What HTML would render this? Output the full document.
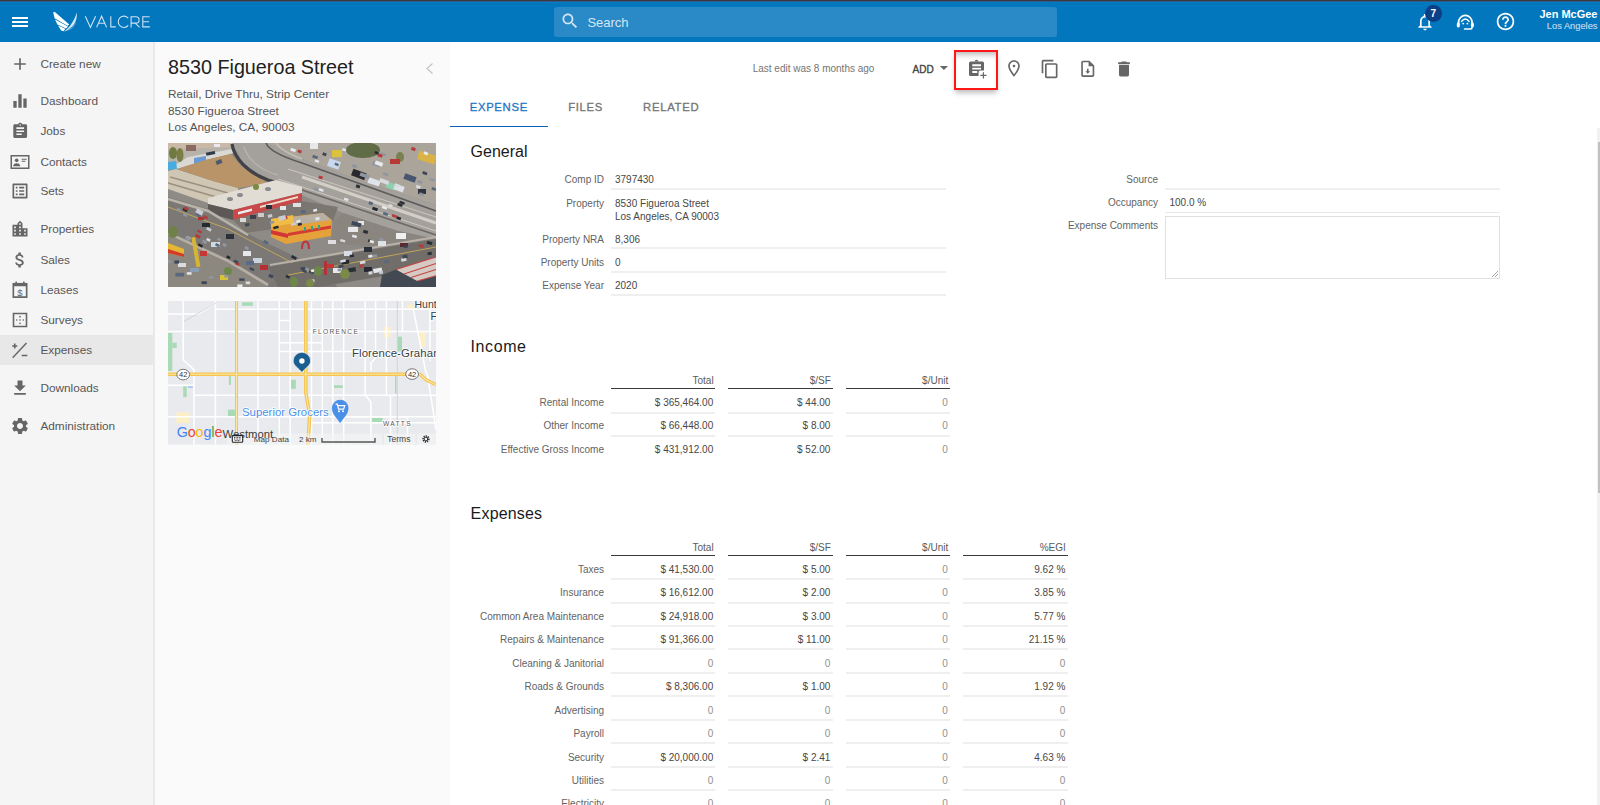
<!DOCTYPE html>
<html><head><meta charset="utf-8"><title>Valcre</title>
<style>
html,body{margin:0;padding:0;width:1600px;height:805px;overflow:hidden;background:#fff;}
body{position:relative;font-family:"Liberation Sans",sans-serif;}
.t{position:absolute;white-space:nowrap;}
.r{position:absolute;display:block;}
</style></head><body>

<div class="r" style="left:0px;top:42px;width:153px;height:763px;background:#f5f5f5;"></div>
<div class="r" style="left:153px;top:42px;width:1.5px;height:763px;background:#e9e9e9;"></div>
<div class="r" style="left:154.5px;top:42px;width:295.5px;height:763px;background:#fafafa;"></div>
<div class="r" style="left:0px;top:0px;width:1600px;height:42px;background:#0277bd;"></div>
<div class="r" style="left:0px;top:0px;width:1600px;height:1px;background:#373945;"></div>
<div class="r" style="left:0px;top:1px;width:1600px;height:1px;background:#35597f;"></div>
<div class="r" style="left:0px;top:2px;width:1600px;height:1px;background:#027bc6;"></div>
<div class="r" style="left:12px;top:16.7px;width:16px;height:2px;background:#ffffff;"></div>
<div class="r" style="left:12px;top:20.9px;width:16px;height:2px;background:#ffffff;"></div>
<div class="r" style="left:12px;top:25.1px;width:16px;height:2px;background:#ffffff;"></div>
<svg class="r" style="left:50px;top:8px;" width="32" height="28" viewBox="0 0 32 28">
<path d="M3.2,4.4 L4.6,3.8 L19.2,16.4 L17.6,17.8 L4.6,10.2 Z" fill="#fff"/>
<path d="M5.0,11.6 L18.0,18.6 L16.0,20.4 L7.4,16.6 Z" fill="#fff"/>
<path d="M8.0,17.6 L15.4,20.8 L13.6,23.2 L11.2,22.4 Z" fill="#fff"/>
<path d="M26.8,4.4 C27.4,12 24.5,19.5 14,23.8 C20.5,18.5 24.5,12 26.8,4.4 Z" fill="#d6e7f4"/>
<path d="M26.3,12 C25,18 21,21.5 15,23.6 C21.5,21.8 25.5,18.5 26.3,12 Z" fill="#a9cce8"/>
</svg>
<svg class="r" style="left:84px;top:14px;" width="68" height="16" viewBox="0 0 68 16">
<g fill="none" stroke="#cfe2f2" stroke-width="1.1" stroke-linejoin="miter">
<path d="M1.3 2.2 L6.45 13.4 L11.6 2.2"/>
<path d="M12.6 13.4 L17.6 2.2 L22.6 13.4 M14.6 9.2 H20.6"/>
<path d="M26.8 2.2 V12.9 H31.8"/>
<path d="M44.2 4.2 A5.6 5.7 0 1 0 44.2 11.4"/>
<path d="M47.1 13.4 V2.7 H51.8 A3.3 3.2 0 0 1 51.8 9.1 H47.1 M51.2 9.1 L55.6 13.4"/>
<path d="M65.6 2.7 H58.8 V12.9 H65.8 M58.8 7.8 H65"/>
</g></svg>
<div class="r" style="left:554px;top:6.7px;width:503px;height:30px;background:#2a8ac8;border-radius:3px;"></div>
<svg class="r" style="left:559.5px;top:11px;" width="20" height="20" viewBox="0 0 24 24"><path fill="#d5e6f3" d="M15.5 14h-.79l-.28-.27C15.41 12.59 16 11.11 16 9.5 16 5.91 13.09 3 9.5 3S3 5.91 3 9.5 5.91 16 9.5 16c1.61 0 3.09-.59 4.23-1.57l.27.28v.79l5 4.99L20.49 19l-4.99-5zm-6 0C7.01 14 5 11.99 5 9.5S7.01 5 9.5 5 14 7.01 14 9.5 11.99 14 9.5 14z"/></svg>
<div class="t" style="left:587.40px;top:16.45px;font-size:13px;line-height:13px;color:#d5e6f3;font-weight:400;">Search</div>
<svg class="r" style="left:1414.5px;top:11.5px;" width="20" height="20" viewBox="0 0 24 24"><path fill="#fff" d="M12 22c1.1 0 2-.9 2-2h-4c0 1.1.89 2 2 2zm6-6v-5c0-3.07-1.64-5.64-4.5-6.32V4c0-.83-.67-1.5-1.5-1.5s-1.5.67-1.5 1.5v.68C7.63 5.36 6 7.92 6 11v5l-2 2v1h16v-1l-2-2zm-2 1H8v-6c0-2.48 1.51-4.5 4-4.5s4 2.02 4 4.5v6z"/></svg>
<div class="r" style="left:1425px;top:5px;width:16.5px;height:16.5px;border-radius:50%;background:#0d3f86;"></div>
<div class="t" style="left:1433.20px;transform:translateX(-50%);top:9.30px;font-size:10px;line-height:10px;color:#ffffff;font-weight:700;">7</div>
<svg class="r" style="left:1455.6px;top:13.6px;" width="18.6" height="16.4" viewBox="0 0 18.6 16.4">
<g fill="none" stroke="#fff" stroke-linecap="round">
<path d="M2.5 10.2 V8.6 A6.8 7.2 0 0 1 16.1 8.6 V10.2" stroke-width="1.7"/>
<path d="M5.6 7.4 Q9.3 2.6 13 7.4" stroke-width="1.5"/>
<path d="M16 12.5 V13.6 Q16 15 14.6 15 H8.6" stroke-width="1.6"/>
</g>
<rect x="0.8" y="8.6" width="3" height="4.8" rx="1.3" fill="#fff"/>
<rect x="14.9" y="8.6" width="3" height="4.8" rx="1.3" fill="#fff"/>
<circle cx="7.2" cy="9.6" r="0.95" fill="#fff"/><circle cx="11.4" cy="9.6" r="0.95" fill="#fff"/>
</svg>
<svg class="r" style="left:1494.8px;top:11.3px;" width="21" height="21" viewBox="0 0 24 24"><path fill="#fff" d="M11 18h2v-2h-2v2zm1-16C6.48 2 2 6.48 2 12s4.48 10 10 10 10-4.48 10-10S17.52 2 12 2zm0 18c-4.41 0-8-3.59-8-8s3.59-8 8-8 8 3.59 8 8-3.59 8-8 8zm0-14c-2.21 0-4 1.79-4 4h2c0-1.1.9-2 2-2s2 .9 2 2c0 2-3 1.75-3 5h2c0-2.25 3-2.5 3-5 0-2.21-1.79-4-4-4z"/></svg>
<div class="t" style="right:2.50px;top:9.15px;font-size:11px;line-height:11px;color:#ffffff;font-weight:700;">Jen McGee</div>
<div class="t" style="right:2.50px;top:22.39px;font-size:9.3px;line-height:9.3px;color:#a6cbe8;font-weight:400;text-shadow:0 0 0.4px #a6cbe8;">Los Angeles</div>
<div class="r" style="left:0px;top:335.3px;width:153px;height:30px;background:#e8e8e8;"></div>
<div class="t" style="left:40.40px;top:58.67px;font-size:11.8px;line-height:11.8px;color:#575757;font-weight:400;">Create new</div>
<svg class="r" style="left:10.2px;top:53.60000000000001px;" width="20" height="20" viewBox="0 0 24 24"><g fill="#666666"><path d="M19 13h-6v6h-2v-6H5v-2h6V5h2v6h6v2z"/></g></svg>
<div class="t" style="left:40.40px;top:96.27px;font-size:11.8px;line-height:11.8px;color:#575757;font-weight:400;">Dashboard</div>
<svg class="r" style="left:10.2px;top:91.2px;" width="20" height="20" viewBox="0 0 24 24"><g fill="#666666"><path d="M10 20h4V4h-4v16zm-6 0h4v-8H4v8zM16 9v11h4V9h-4z"/></g></svg>
<div class="t" style="left:40.40px;top:126.17px;font-size:11.8px;line-height:11.8px;color:#575757;font-weight:400;">Jobs</div>
<svg class="r" style="left:11.0px;top:121.89999999999999px;" width="18.4" height="18.4" viewBox="0 0 24 24"><g fill="#666666"><path d="M19 3h-4.18C14.4 1.84 13.3 1 12 1c-1.3 0-2.4.84-2.82 2H5c-1.1 0-2 .9-2 2v14c0 1.1.9 2 2 2h14c1.1 0 2-.9 2-2V5c0-1.1-.9-2-2-2zm-7 0c.55 0 1 .45 1 1s-.45 1-1 1-1-.45-1-1 .45-1 1-1zm2 14H7v-2h7v2zm3-4H7v-2h10v2zm0-4H7V7h10v2z"/></g></svg>
<div class="t" style="left:40.40px;top:156.57px;font-size:11.8px;line-height:11.8px;color:#575757;font-weight:400;">Contacts</div>
<svg class="r" style="left:10.2px;top:151.5px;" width="20" height="20" viewBox="0 0 24 24"><g fill="#666666"><path d="M1.5 4.5h21v15h-21z" fill="none" stroke="#666" stroke-width="1.8"/><circle cx="8" cy="10" r="2.2"/><path d="M3.8 16.5c0-2 2.8-3 4.2-3s4.2 1 4.2 3v.6H3.8z"/><path d="M14 8h6v1.2h-6zM14 10.5h4.5v1.2H14z"/></g></svg>
<div class="t" style="left:40.40px;top:186.47px;font-size:11.8px;line-height:11.8px;color:#575757;font-weight:400;">Sets</div>
<svg class="r" style="left:10.2px;top:181.39999999999998px;" width="20" height="20" viewBox="0 0 24 24"><g fill="#666666"><path d="M19 5v14H5V5h14m1.1-2H3.9c-.5 0-.9.4-.9.9v16.2c0 .4.4.9.9.9h16.2c.4 0 .9-.5.9-.9V3.9c0-.5-.5-.9-.9-.9zM11 7h6v2h-6V7zm0 4h6v2h-6v-2zm0 4h6v2h-6zM7 7h2v2H7zm0 4h2v2H7zm0 4h2v2H7z"/></g></svg>
<div class="t" style="left:40.40px;top:224.37px;font-size:11.8px;line-height:11.8px;color:#575757;font-weight:400;">Properties</div>
<svg class="r" style="left:10.2px;top:219.29999999999998px;" width="20" height="20" viewBox="0 0 24 24"><g fill="#666666"><path d="M15 11V5l-3-3-3 3v2H3v14h18V11h-6zm-8 8H5v-2h2v2zm0-4H5v-2h2v2zm0-4H5V9h2v2zm6 8h-2v-2h2v2zm0-4h-2v-2h2v2zm0-4h-2V9h2v2zm0-4h-2V5h2v2zm6 12h-2v-2h2v2zm0-4h-2v-2h2v2z"/></g></svg>
<div class="t" style="left:40.40px;top:254.67px;font-size:11.8px;line-height:11.8px;color:#575757;font-weight:400;">Sales</div>
<svg class="r" style="left:10.2px;top:249.59999999999997px;" width="20" height="20" viewBox="0 0 24 24"><g fill="#666666"><path d="M11.8 10.9c-2.27-.59-3-1.2-3-2.15 0-1.09 1.01-1.85 2.7-1.85 1.78 0 2.440.85 2.5 2.1h2.21c-.07-1.72-1.12-3.3-3.21-3.81V3h-3v2.16c-1.94.42-3.5 1.68-3.5 3.61 0 2.31 1.910 3.46 4.7 4.13 2.5.6 3 1.48 3 2.410 0 .69-.49 1.79-2.7 1.79-2.06 0-2.87-.92-2.98-2.1h-2.2c.12 2.19 1.76 3.42 3.68 3.83V21h3v-2.15c1.95-.37 3.5-1.5 3.5-3.55 0-2.84-2.43-3.81-4.7-4.4z"/></g></svg>
<div class="t" style="left:40.40px;top:284.57px;font-size:11.8px;line-height:11.8px;color:#575757;font-weight:400;">Leases</div>
<svg class="r" style="left:10.2px;top:279.5px;" width="20" height="20" viewBox="0 0 24 24"><g fill="#666666"><path d="M4 4.5h16v16H4z" fill="none" stroke="#666" stroke-width="2"/><path d="M4 3.5h16v4H4z"/><path d="M6.5 1.8h1.8v3H6.5zM15.7 1.8h1.8v3h-1.8z"/><text x="12" y="18.9" font-size="11.5" text-anchor="middle" font-family="Liberation Sans" fill="#666">$</text></g></svg>
<div class="t" style="left:40.40px;top:314.97px;font-size:11.8px;line-height:11.8px;color:#575757;font-weight:400;">Surveys</div>
<svg class="r" style="left:10.2px;top:309.9px;" width="20" height="20" viewBox="0 0 24 24"><g fill="#666666"><path d="M4.2 4.2h15.6v15.6H4.2z" fill="none" stroke="#666" stroke-width="1.9"/><circle cx="12" cy="8" r="1"/><circle cx="12" cy="12" r="1"/><circle cx="12" cy="16" r="1"/><circle cx="8" cy="12" r="1"/><circle cx="16" cy="12" r="1"/></g></svg>
<div class="t" style="left:40.40px;top:345.37px;font-size:11.8px;line-height:11.8px;color:#575757;font-weight:400;">Expenses</div>
<svg class="r" style="left:10.2px;top:340.3px;" width="20" height="20" viewBox="0 0 24 24"><g fill="#666666"><path d="M2.6 6.3h6.2v1.9H2.6zM4.75 4.1h1.9v6.2H4.75zM14 17.6h6.8v1.9H14z"/><path d="M3.2 21.2 L19.8 3.6" stroke="#666" stroke-width="1.7" fill="none"/></g></svg>
<div class="t" style="left:40.40px;top:383.17px;font-size:11.8px;line-height:11.8px;color:#575757;font-weight:400;">Downloads</div>
<svg class="r" style="left:10.2px;top:378.09999999999997px;" width="20" height="20" viewBox="0 0 24 24"><g fill="#666666"><path d="M19 9h-4V3H9v6H5l7 7 7-7zM5 18v2h14v-2H5z"/></g></svg>
<div class="t" style="left:40.40px;top:420.67px;font-size:11.8px;line-height:11.8px;color:#575757;font-weight:400;">Administration</div>
<svg class="r" style="left:10.2px;top:415.59999999999997px;" width="20" height="20" viewBox="0 0 24 24"><g fill="#666666"><path d="M19.14 12.94c.04-.3.06-.61.06-.94 0-.32-.02-.64-.07-.94l2.030-1.58c.18-.14.23-.41.12-.61l-1.92-3.32c-.12-.22-.37-.29-.59-.22l-2.39.96c-.5-.38-1.03-.7-1.62-.94l-.36-2.54c-.04-.24-.24-.41-.48-.41h-3.84c-.24 0-.43.17-.47.41l-.36 2.54c-.59.24-1.13.57-1.62.94l-2.39-.96c-.22-.08-.47 0-.59.22L2.74 8.87c-.12.21-.08.47.12.61l2.03 1.58c-.05.3-.09.63-.09.94s.02.64.07.94l-2.03 1.58c-.18.14-.23.41-.12.61l1.92 3.32c.12.22.37.29.59.22l2.39-.96c.5.38 1.03.7 1.62.94l.36 2.54c.05.24.24.41.48.41h3.84c.24 0 .44-.17.47-.41l.36-2.54c.59-.24 1.13-.56 1.62-.94l2.39.96c.22.08.47 0 .59-.22l1.92-3.32c.12-.22.07-.47-.12-.61l-2.010-1.58zM12 15.6c-1.98 0-3.6-1.62-3.6-3.6s1.62-3.6 3.6-3.6 3.6 1.62 3.6 3.6-1.62 3.6-3.6 3.6z"/></g></svg>
<div class="t" style="left:168.00px;top:58.01px;font-size:19.75px;line-height:19.75px;color:#212121;font-weight:400;">8530 Figueroa Street</div>
<div class="t" style="left:168.00px;top:88.67px;font-size:11.8px;line-height:11.8px;color:#555555;font-weight:400;">Retail, Drive Thru, Strip Center</div>
<div class="t" style="left:168.00px;top:105.52px;font-size:11.8px;line-height:11.8px;color:#555555;font-weight:400;">8530 Figueroa Street</div>
<div class="t" style="left:168.00px;top:122.27px;font-size:11.8px;line-height:11.8px;color:#555555;font-weight:400;">Los Angeles, CA, 90003</div>
<svg class="r" style="left:424px;top:62px;" width="12" height="13" viewBox="0 0 12 13"><path d="M8.5 1.5 L3 6.5 L8.5 11.5" fill="none" stroke="#c4c4c4" stroke-width="1.2"/></svg>
<svg class="r" style="left:168px;top:143px" width="268" height="144" viewBox="0 0 268 144" preserveAspectRatio="none">
<defs><filter id="pb" x="-5%" y="-5%" width="110%" height="110%"><feGaussianBlur stdDeviation="0.7"/></filter></defs>
<rect width="268" height="144" fill="#8e8a85"/>
<g filter="url(#pb)">
<!-- top-left urban -->
<polygon points="0,0 68,0 64,8 40,12 9,24 0,27" fill="#b7b3aa"/>
<polygon points="0,0 68,0 66,4 0,6" fill="#c9b9a6"/>
<polygon points="20,14 64,6 66,10 39,17 9,26 4,24" fill="#d9d8d4"/>
<polygon points="0,19 8,18 9,26 0,27" fill="#46ade0"/>
<polygon points="26,15 38,13 38,18 26,21" fill="#6a9ad6"/>
<ellipse cx="5" cy="10" rx="4" ry="6" fill="#6e7a40"/>
<ellipse cx="12" cy="12" rx="3.5" ry="7" fill="#7c7c45"/>
<rect x="38" y="9" width="9" height="3" fill="#2f3a4a" transform="rotate(-12 42 10)"/>
<rect x="18" y="2" width="10" height="6" fill="#8a6a60"/>
<rect x="46" y="1" width="6" height="3" fill="#e8ecf0"/>
<!-- building rows beige -->
<polygon points="0,28 8,26 45,38 70,45 70,52 40,60 0,46" fill="#cfc6b4"/>
<path d="M2,34 L60,50 M0,40 L55,56" stroke="#9c9181" stroke-width="1.5"/>
<!-- dirt lot -->
<polygon points="9,26 39,16.6 63,11 74,24 95,36 98,40 70,45 45,38" fill="#b89468"/>
<rect x="48" y="17" width="6" height="4" fill="#4b5a70" transform="rotate(-20 51 19)"/>
<!-- parking lot top right -->
<polygon points="98,0 268,0 268,62 200,40 160,26 134,16 112,7" fill="#aaa49b"/>
<ellipse cx="195" cy="7" rx="17" ry="8" fill="#5e6c46"/>
<ellipse cx="232" cy="14" rx="4" ry="5" fill="#7a8050"/>
<rect x="164" y="7" width="10" height="7" fill="#dcc23a"/>
<rect x="250" y="10" width="18" height="9" fill="#d9b347" transform="rotate(18 259 14)"/>
<rect x="142" y="0" width="8" height="6" fill="#e8e8ea"/>
<rect x="160" y="17" width="12" height="8" fill="#c8d8ee" transform="rotate(20 166 21)"/>
<rect x="184" y="28" width="14" height="7" fill="#2b2b2e" transform="rotate(20 191 31)"/>
<rect x="200" y="36" width="12" height="7" fill="#dfe3ea" transform="rotate(20 206 39)"/>
<rect x="218" y="40" width="10" height="6" fill="#8cd0b0" transform="rotate(20 223 43)"/>
<rect x="226" y="42" width="10" height="6" fill="#dde2e8" transform="rotate(20 231 45)"/>
<rect x="236" y="32" width="12" height="6" fill="#4a5670" transform="rotate(20 242 35)"/>
<rect x="250" y="46" width="8" height="5" fill="#2e3440"/>
<rect x="222" y="16" width="10" height="5" fill="#b83838"/>
<!-- freeway band -->
<polygon points="64,0 98,0 112,7 134,16 160,26 200,40 268,62 268,96 230,88 175,70 134,52 100,38 75,20" fill="#a4a09b"/>
<path d="M64,1 C66,15 80,30 100,37 L134,47" stroke="#3f4247" stroke-width="3.2" fill="none"/>
<path d="M98,0 C100,6 112,13 134,20 L268,68" stroke="#5b5a5a" stroke-width="1.5" fill="none"/>
<path d="M134,34 L268,80" stroke="#d4cfc6" stroke-width="3" fill="none"/>
<path d="M120,26 L268,74" stroke="#c9c4bc" stroke-width="1.2" fill="none"/>
<path d="M110,36 L268,88" stroke="#c9c4bc" stroke-width="1.2" fill="none"/>
<path d="M134,47 L268,92" stroke="#6c6866" stroke-width="1.5" fill="none"/>
<path d="M76,4 C80,18 95,28 110,32" stroke="#b7b2ab" stroke-width="1.5" fill="none"/>
<path d="M108,0 C114,8 124,12 134,16" stroke="#c2bdb5" stroke-width="1.5" fill="none"/>
<!-- white building -->
<polygon points="40,55 108,37 134,44 134,50 65,67 40,61" fill="#e1ddd4"/>
<polygon points="40,61 65,67 65,77 40,70" fill="#5d5956"/>
<polygon points="65,67 134,50 134,58 65,77" fill="#c84848"/>
<polygon points="70,69 84,65.5 84,68 70,71.5" fill="#eeeeee"/>
<polygon points="92,63 130,53 130,55 92,65" fill="#eadfcf"/>
<ellipse cx="62" cy="56" rx="3" ry="2" fill="#8a8b90"/><ellipse cx="72" cy="52" rx="3" ry="2" fill="#8a8b90"/><ellipse cx="100" cy="46" rx="3" ry="2" fill="#8a8b90"/>
<ellipse cx="88" cy="44" rx="3" ry="3" fill="#7b8a40"/>
<!-- front parking -->
<polygon points="65,77 134,58 170,64 165,78 105,86 78,90" fill="#7b7670"/>
<rect x="98" y="62" width="6" height="4" fill="#2c2f38"/><rect x="112" y="63" width="6" height="4" fill="#e6e6e8"/><rect x="125" y="60" width="8" height="4" fill="#e0e0e2"/>
<rect x="72" y="75" width="6" height="4" fill="#d8d8da"/><rect x="82" y="72" width="6" height="4" fill="#3a3f4a"/><rect x="90" y="70" width="6" height="4" fill="#cccccf"/>
<!-- lot right of orange building -->
<polygon points="165,78 175,70 230,88 268,96 268,110 200,104 163,100" fill="#8a857f"/>
<rect x="180" y="84" width="10" height="5" fill="#e8e8ea"/><rect x="160" y="97" width="8" height="4" fill="#dedee0"/>
<rect x="190" y="78" width="6" height="4" fill="#e8e8ea"/>
<!-- orange building -->
<polygon points="103,76 155,70 164,77 163,93 118,101 103,94" fill="#e5a23a"/>
<polygon points="103,76 125,72 127,80 103,84" fill="#efbd45"/>
<polygon points="125,74 155,70 163,77 127,82" fill="#b9b0a4"/>
<polygon points="103,87 120,91 120,95 103,91" fill="#d43434"/>
<polygon points="120,90 163,82.5 163,85.5 120,93" fill="#d43a30"/>
<rect x="136" y="84" width="2" height="4" fill="#3aa080"/><rect x="143" y="83" width="2" height="4" fill="#3aa080"/><rect x="150" y="82" width="2" height="4" fill="#3aa080"/>
<path d="M134,106 C134,96 141,96 141,106" stroke="#c0303a" stroke-width="2" fill="none"/>
<!-- lower-left boulevard -->
<polygon points="0,54 40,66 78,90 120,110 150,126 170,144 100,144 60,120 0,92" fill="#7b7875"/>
<path d="M0,64 L60,86 L140,128" stroke="#c2a858" stroke-width="1" fill="none"/>
<path d="M0,56 L40,68 L80,92" stroke="#b9b3aa" stroke-width="2.5" fill="none"/>
<path d="M0,90 L60,118 L100,142" stroke="#b4aea4" stroke-width="3" fill="none"/>
<rect x="34" y="80" width="8" height="4" fill="#272a30"/><rect x="43" y="99" width="9" height="5" fill="#cfd8e2"/><rect x="58" y="91" width="8" height="5" fill="#2c3038"/>
<rect x="75" y="108" width="8" height="5" fill="#e6e8ec"/><rect x="85" y="115" width="9" height="5" fill="#c9d3de"/><rect x="92" y="122" width="8" height="5" fill="#b72f30"/>
<rect x="78" y="118" width="8" height="4" fill="#596c8a"/>
<rect x="30" y="74" width="6" height="3" fill="#b03030"/>
<!-- bottom-left lot -->
<polygon points="0,92 60,120 100,144 0,144" fill="#8c877f"/>
<polygon points="0,100 16,106 16,114 0,110" fill="#e5b733"/>
<polygon points="0,106 16,111 16,114 0,110" fill="#d33a2a"/>
<rect x="26" y="94" width="4" height="30" fill="#d6b533" transform="rotate(-10 28 110)"/>
<rect x="32" y="108" width="7" height="5" fill="#c63838"/>
<rect x="10" y="120" width="8" height="4" fill="#dadcde"/><rect x="22" y="125" width="9" height="4" fill="#8b9db5"/>
<rect x="52" y="132" width="8" height="5" fill="#d9c338"/>
<!-- lower-right road -->
<polygon points="100,124 170,112 268,96 268,126 210,134 150,144 110,144" fill="#716e6b"/>
<path d="M120,132 L268,104" stroke="#c3a356" stroke-width="1" fill="none"/>
<path d="M102,122 L268,94" stroke="#b8b2a9" stroke-width="2" fill="none"/>
<rect x="176" y="108" width="8" height="5" fill="#d8dde5"/><rect x="196" y="104" width="8" height="5" fill="#2b303a"/><rect x="210" y="98" width="8" height="5" fill="#dfe3e8"/>
<rect x="158" y="121" width="8" height="4" fill="#c83636"/><rect x="165" y="125" width="9" height="5" fill="#e6e8ec"/><rect x="228" y="90" width="10" height="6" fill="#f0f0f0"/>
<rect x="232" y="100" width="8" height="4" fill="#5a2a30"/>
<rect x="196" y="124" width="8" height="5" fill="#262a32"/>
<!-- cars -->
<rect x="254.5" y="28.8" width="4.7" height="2.8" fill="#3d4658" transform="rotate(20 256.8 30.2)"/>
<rect x="249.4" y="37.7" width="4.8" height="2.6" fill="#8f96a0" transform="rotate(20 251.8 39.0)"/>
<rect x="211.4" y="36.4" width="9.6" height="4.1" fill="#d9dadd" transform="rotate(20 216.2 38.4)"/>
<rect x="146.8" y="17.0" width="4.3" height="2.3" fill="#e4e6ea" transform="rotate(20 148.9 18.1)"/>
<rect x="255.8" y="8.9" width="4.2" height="2.9" fill="#e9eaec" transform="rotate(20 257.9 10.3)"/>
<rect x="243.3" y="4.5" width="4.2" height="3.0" fill="#b63a3a" transform="rotate(20 245.4 6.0)"/>
<rect x="167.9" y="20.9" width="3.8" height="2.6" fill="#c9ccd2" transform="rotate(20 169.9 22.2)"/>
<rect x="154.5" y="9.8" width="3.9" height="2.9" fill="#3d4658" transform="rotate(20 156.5 11.3)"/>
<rect x="263.6" y="44.7" width="4.5" height="2.6" fill="#59677d" transform="rotate(20 265.8 46.0)"/>
<rect x="261.5" y="35.7" width="5.5" height="2.3" fill="#8f96a0" transform="rotate(20 264.3 36.8)"/>
<rect x="212.3" y="10.0" width="5.5" height="2.5" fill="#8f96a0" transform="rotate(20 215.0 11.2)"/>
<rect x="166.7" y="20.2" width="3.9" height="2.4" fill="#59677d" transform="rotate(20 168.7 21.4)"/>
<rect x="209.7" y="11.1" width="4.8" height="3.0" fill="#b63a3a" transform="rotate(20 212.1 12.6)"/>
<rect x="144.4" y="12.5" width="5.3" height="3.0" fill="#59677d" transform="rotate(20 147.1 14.0)"/>
<rect x="129.6" y="7.1" width="4.0" height="2.7" fill="#b63a3a" transform="rotate(20 131.6 8.5)"/>
<rect x="204.4" y="19.2" width="7.7" height="4.1" fill="#8f96a0" transform="rotate(20 208.3 21.3)"/>
<rect x="207.0" y="18.6" width="7.8" height="3.9" fill="#e9eaec" transform="rotate(20 210.9 20.6)"/>
<rect x="184.1" y="21.9" width="5.0" height="2.7" fill="#8f96a0" transform="rotate(20 186.7 23.2)"/>
<rect x="122.5" y="5.5" width="5.3" height="2.9" fill="#e9eaec" transform="rotate(20 125.2 6.9)"/>
<rect x="206.6" y="8.6" width="3.9" height="2.5" fill="#2a2d34" transform="rotate(20 208.6 9.9)"/>
<rect x="226.5" y="41.1" width="5.1" height="3.0" fill="#d9dadd" transform="rotate(20 229.1 42.6)"/>
<rect x="251.1" y="49.8" width="4.5" height="2.9" fill="#8f96a0" transform="rotate(20 253.3 51.3)"/>
<rect x="174.2" y="5.5" width="3.9" height="2.4" fill="#e4e6ea" transform="rotate(20 176.1 6.6)"/>
<rect x="248.0" y="42.4" width="4.5" height="2.9" fill="#d9dadd" transform="rotate(20 250.2 43.9)"/>
<rect x="191.8" y="30.9" width="9.9" height="3.6" fill="#8f96a0" transform="rotate(20 196.8 32.8)"/>
<rect x="215.0" y="30.0" width="5.3" height="2.6" fill="#8f96a0" transform="rotate(20 217.7 31.3)"/>
<rect x="27.7" y="70.5" width="5.3" height="2.8" fill="#59677d" transform="rotate(28 30.4 71.9)"/>
<rect x="27.2" y="91.8" width="5.2" height="3.0" fill="#b63a3a" transform="rotate(28 29.8 93.3)"/>
<rect x="27.9" y="66.8" width="7.2" height="4.5" fill="#c9ccd2" transform="rotate(28 31.5 69.0)"/>
<rect x="136.6" y="124.8" width="4.5" height="2.7" fill="#8f96a0" transform="rotate(28 138.9 126.1)"/>
<rect x="18.5" y="93.8" width="3.8" height="3.0" fill="#c9ccd2" transform="rotate(28 20.4 95.3)"/>
<rect x="14.9" y="65.5" width="4.7" height="2.8" fill="#2a2d34" transform="rotate(28 17.3 66.9)"/>
<rect x="38.4" y="85.0" width="5.0" height="2.7" fill="#c9ccd2" transform="rotate(28 40.9 86.4)"/>
<rect x="17.1" y="93.7" width="4.9" height="3.0" fill="#8f96a0" transform="rotate(28 19.5 95.2)"/>
<rect x="95.3" y="97.9" width="5.2" height="2.6" fill="#59677d" transform="rotate(28 97.9 99.2)"/>
<rect x="117.7" y="132.5" width="4.0" height="2.5" fill="#2a2d34" transform="rotate(28 119.7 133.8)"/>
<rect x="134.3" y="127.0" width="4.4" height="2.4" fill="#3d4658" transform="rotate(28 136.5 128.2)"/>
<rect x="100.7" y="131.6" width="4.6" height="3.1" fill="#3d4658" transform="rotate(28 103.0 133.1)"/>
<rect x="123.3" y="113.2" width="5.4" height="2.7" fill="#2a2d34" transform="rotate(28 126.0 114.5)"/>
<rect x="81.4" y="124.9" width="4.8" height="2.4" fill="#3d4658" transform="rotate(28 83.8 126.2)"/>
<rect x="140.8" y="128.1" width="4.8" height="2.5" fill="#3d4658" transform="rotate(28 143.2 129.3)"/>
<rect x="76.6" y="103.6" width="4.1" height="2.7" fill="#8f96a0" transform="rotate(28 78.6 105.0)"/>
<rect x="54.6" y="100.6" width="3.9" height="3.0" fill="#8f96a0" transform="rotate(28 56.6 102.1)"/>
<rect x="16.2" y="64.1" width="4.1" height="3.0" fill="#b63a3a" transform="rotate(28 18.3 65.6)"/>
<rect x="38.4" y="95.5" width="4.0" height="2.6" fill="#d9dadd" transform="rotate(28 40.4 96.8)"/>
<rect x="34.3" y="97.5" width="4.6" height="2.8" fill="#8f96a0" transform="rotate(28 36.7 98.9)"/>
<rect x="35.2" y="72.9" width="4.7" height="2.6" fill="#b63a3a" transform="rotate(28 37.6 74.2)"/>
<rect x="30.0" y="101.3" width="4.8" height="2.4" fill="#24272e" transform="rotate(28 32.4 102.5)"/>
<rect x="58.5" y="113.0" width="3.8" height="2.5" fill="#24272e" transform="rotate(28 60.4 114.2)"/>
<rect x="8.7" y="65.3" width="3.9" height="2.7" fill="#8f96a0" transform="rotate(28 10.6 66.7)"/>
<rect x="15.2" y="70.9" width="4.1" height="2.5" fill="#8f96a0" transform="rotate(28 17.2 72.1)"/>
<rect x="67.1" y="119.4" width="4.4" height="2.7" fill="#b63a3a" transform="rotate(28 69.3 120.7)"/>
<rect x="29.1" y="87.4" width="4.9" height="2.3" fill="#b63a3a" transform="rotate(28 31.5 88.6)"/>
<rect x="65.8" y="117.4" width="4.5" height="2.5" fill="#3d4658" transform="rotate(28 68.1 118.6)"/>
<rect x="47.3" y="100.9" width="4.4" height="2.6" fill="#59677d" transform="rotate(28 49.5 102.2)"/>
<rect x="49.3" y="95.2" width="3.8" height="2.6" fill="#8f96a0" transform="rotate(28 51.3 96.4)"/>
<rect x="259.6" y="109.2" width="4.2" height="2.6" fill="#2a2d34" transform="rotate(-10 261.7 110.6)"/>
<rect x="205.3" y="125.3" width="8.8" height="4.2" fill="#e4e6ea" transform="rotate(-10 209.7 127.5)"/>
<rect x="173.4" y="117.3" width="7.8" height="3.8" fill="#24272e" transform="rotate(-10 177.3 119.2)"/>
<rect x="191.9" y="118.0" width="5.4" height="2.8" fill="#d9dadd" transform="rotate(-10 194.7 119.3)"/>
<rect x="200.5" y="128.4" width="3.9" height="3.0" fill="#d9dadd" transform="rotate(-10 202.4 129.9)"/>
<rect x="191.1" y="121.7" width="4.5" height="2.7" fill="#b63a3a" transform="rotate(-10 193.3 123.1)"/>
<rect x="200.3" y="111.9" width="4.3" height="2.8" fill="#e4e6ea" transform="rotate(-10 202.4 113.4)"/>
<rect x="211.2" y="127.9" width="3.8" height="2.9" fill="#c9ccd2" transform="rotate(-10 213.2 129.4)"/>
<rect x="169.7" y="125.5" width="3.9" height="2.6" fill="#8f96a0" transform="rotate(-10 171.6 126.7)"/>
<rect x="172.3" y="116.8" width="5.5" height="2.5" fill="#d9dadd" transform="rotate(-10 175.0 118.1)"/>
<rect x="143.0" y="126.4" width="3.9" height="2.6" fill="#e9eaec" transform="rotate(-10 145.0 127.7)"/>
<rect x="170.5" y="121.8" width="4.9" height="2.8" fill="#3d4658" transform="rotate(-10 173.0 123.2)"/>
<rect x="235.7" y="102.6" width="4.3" height="2.4" fill="#3d4658" transform="rotate(-10 237.9 103.8)"/>
<rect x="204.7" y="111.7" width="4.3" height="2.8" fill="#8f96a0" transform="rotate(-10 206.9 113.1)"/>
<rect x="141.7" y="136.6" width="4.7" height="2.8" fill="#e9eaec" transform="rotate(-10 144.0 138.0)"/>
<rect x="147.7" y="128.5" width="5.4" height="2.4" fill="#24272e" transform="rotate(-10 150.4 129.7)"/>
<rect x="181.7" y="111.5" width="4.4" height="2.7" fill="#2a2d34" transform="rotate(-10 183.9 112.9)"/>
<rect x="233.2" y="115.3" width="5.2" height="3.0" fill="#d9dadd" transform="rotate(-10 235.8 116.8)"/>
<rect x="234.6" y="112.0" width="4.9" height="3.1" fill="#3d4658" transform="rotate(-10 237.0 113.5)"/>
<rect x="132.6" y="124.1" width="4.8" height="2.7" fill="#3d4658" transform="rotate(-10 135.0 125.5)"/>
<rect x="180.2" y="124.7" width="7.6" height="4.2" fill="#2a2d34" transform="rotate(-10 184.0 126.8)"/>
<rect x="215.8" y="117.5" width="5.1" height="2.6" fill="#59677d" transform="rotate(-10 218.3 118.8)"/>
<rect x="101.8" y="78.2" width="4.4" height="2.4" fill="#8f96a0" transform="rotate(-15 104.0 79.4)"/>
<rect x="132.9" y="67.2" width="4.7" height="3.1" fill="#59677d" transform="rotate(-15 135.3 68.7)"/>
<rect x="105.3" y="83.2" width="5.3" height="2.5" fill="#24272e" transform="rotate(-15 108.0 84.4)"/>
<rect x="123.0" y="79.8" width="5.1" height="2.6" fill="#c9ccd2" transform="rotate(-15 125.6 81.1)"/>
<rect x="147.4" y="74.1" width="4.1" height="2.9" fill="#e4e6ea" transform="rotate(-15 149.5 75.5)"/>
<rect x="145.2" y="66.1" width="3.9" height="2.4" fill="#e9eaec" transform="rotate(-15 147.1 67.3)"/>
<rect x="129.9" y="79.9" width="3.9" height="2.7" fill="#2a2d34" transform="rotate(-15 131.9 81.3)"/>
<rect x="77.0" y="80.2" width="4.5" height="2.9" fill="#3d4658" transform="rotate(-15 79.3 81.6)"/>
<rect x="99.9" y="71.5" width="4.4" height="2.9" fill="#c9ccd2" transform="rotate(-15 102.1 73.0)"/>
<rect x="114.4" y="73.5" width="5.0" height="2.9" fill="#b63a3a" transform="rotate(-15 116.9 74.9)"/>
<rect x="110.5" y="72.8" width="7.3" height="4.4" fill="#c9ccd2" transform="rotate(-15 114.1 75.0)"/>
<rect x="128.2" y="77.1" width="4.3" height="2.6" fill="#e4e6ea" transform="rotate(-15 130.3 78.4)"/>
<rect x="56.3" y="132.1" width="4.1" height="2.3" fill="#8f96a0" transform="rotate(0 58.3 133.2)"/>
<rect x="41.1" y="133.2" width="4.3" height="2.5" fill="#8f96a0" transform="rotate(0 43.3 134.4)"/>
<rect x="18.8" y="129.2" width="4.8" height="2.5" fill="#e4e6ea" transform="rotate(0 21.2 130.4)"/>
<rect x="33.5" y="138.3" width="5.4" height="2.8" fill="#3d4658" transform="rotate(0 36.2 139.7)"/>
<rect x="77.7" y="138.5" width="4.4" height="2.7" fill="#d9dadd" transform="rotate(0 79.9 139.9)"/>
<rect x="69.3" y="141.4" width="5.2" height="2.9" fill="#e9eaec" transform="rotate(0 71.8 142.8)"/>
<rect x="-1.2" y="117.2" width="4.4" height="2.9" fill="#8f96a0" transform="rotate(0 1.0 118.7)"/>
<rect x="7.4" y="129.8" width="8.7" height="3.7" fill="#59677d" transform="rotate(0 11.8 131.6)"/>
<rect x="71.3" y="135.4" width="5.2" height="2.4" fill="#3d4658" transform="rotate(0 73.9 136.6)"/>
<rect x="6.4" y="117.5" width="4.6" height="3.1" fill="#3d4658" transform="rotate(0 8.7 119.0)"/>
<rect x="184.1" y="92.2" width="4.7" height="2.4" fill="#e4e6ea" transform="rotate(15 186.5 93.4)"/>
<rect x="195.2" y="87.4" width="4.7" height="3.1" fill="#2a2d34" transform="rotate(15 197.6 89.0)"/>
<rect x="200.1" y="96.7" width="4.0" height="2.6" fill="#2a2d34" transform="rotate(15 202.1 98.0)"/>
<rect x="201.7" y="97.3" width="4.2" height="2.8" fill="#e9eaec" transform="rotate(15 203.8 98.7)"/>
<rect x="250.7" y="101.5" width="5.0" height="3.0" fill="#b63a3a" transform="rotate(15 253.2 103.0)"/>
<rect x="258.8" y="98.5" width="5.4" height="2.9" fill="#2a2d34" transform="rotate(15 261.6 100.0)"/>
<rect x="188.9" y="81.1" width="5.0" height="2.6" fill="#8f96a0" transform="rotate(15 191.4 82.4)"/>
<rect x="211.1" y="95.2" width="4.6" height="2.6" fill="#8f96a0" transform="rotate(15 213.4 96.5)"/>
<rect x="172.2" y="96.5" width="5.0" height="2.4" fill="#d9dadd" transform="rotate(15 174.7 97.7)"/>
<rect x="183.5" y="79.1" width="9.8" height="3.9" fill="#3d4658" transform="rotate(15 188.3 81.0)"/>
<rect x="150.6" y="33.0" width="4.1" height="2.9" fill="#b63a3a" transform="rotate(20 152.6 34.4)"/>
<rect x="215.1" y="69.6" width="4.8" height="2.6" fill="#59677d" transform="rotate(20 217.5 70.9)"/>
<rect x="220.6" y="61.3" width="3.8" height="2.6" fill="#d9dadd" transform="rotate(20 222.5 62.6)"/>
<rect x="145.9" y="45.0" width="4.7" height="2.9" fill="#8f96a0" transform="rotate(20 148.2 46.4)"/>
<rect x="200.7" y="58.7" width="4.1" height="3.0" fill="#59677d" transform="rotate(20 202.8 60.2)"/>
<rect x="188.0" y="41.9" width="4.0" height="3.0" fill="#2a2d34" transform="rotate(20 189.9 43.4)"/>
<rect x="213.9" y="63.6" width="5.1" height="2.4" fill="#e9eaec" transform="rotate(20 216.4 64.8)"/>
<rect x="150.8" y="45.8" width="4.8" height="2.4" fill="#e4e6ea" transform="rotate(20 153.2 47.0)"/>
<rect x="228.5" y="73.8" width="4.5" height="2.7" fill="#24272e" transform="rotate(20 230.7 75.1)"/>
<rect x="223.8" y="71.7" width="5.1" height="2.7" fill="#b63a3a" transform="rotate(20 226.4 73.1)"/>
<rect x="176.0" y="55.3" width="4.5" height="2.3" fill="#e4e6ea" transform="rotate(20 178.3 56.4)"/>
<rect x="229.5" y="60.6" width="5.1" height="2.5" fill="#2a2d34" transform="rotate(20 232.1 61.8)"/>
<rect x="204.3" y="64.5" width="5.4" height="3.0" fill="#24272e" transform="rotate(20 207.0 66.0)"/>
<rect x="231.4" y="58.5" width="5.3" height="2.4" fill="#2a2d34" transform="rotate(20 234.0 59.7)"/>
<!-- gas station bottom right -->
<polygon points="228,126.6 249.4,138 268,132.8 268,144 212,144 214,132" fill="#424852"/>
<polygon points="228,126.6 268,114 268,132.8 249.4,138" fill="#d6cbc4"/>
<path d="M228,126.6 L268,114 M249.4,138 L268,132.8 M236,131 L268,120.5 M243,134.5 L268,126.5" stroke="#c64444" stroke-width="1.1"/>
<!-- trees -->
<ellipse cx="5" cy="89" rx="5" ry="6" fill="#708048"/>
<ellipse cx="150" cy="128" rx="4" ry="5" fill="#6d8748"/><ellipse cx="177" cy="131" rx="5" ry="5" fill="#7a8a48"/>
<ellipse cx="126" cy="139" rx="4" ry="5" fill="#6d8748"/><ellipse cx="142" cy="140" rx="4" ry="4" fill="#7a8a48"/>
<ellipse cx="60" cy="128" rx="4" ry="4" fill="#6d8748"/>
<rect x="156" y="118" width="3" height="14" fill="#b0303a"/>
</g>
</svg>

<svg class="r" style="left:168px;top:301px" width="268" height="143.5" viewBox="0 0 268 143.5">
<rect width="268" height="143.5" fill="#e8eaed"/>
<!-- parks -->
<g fill="#a8dab5">
<rect x="0" y="32" width="4.3" height="38"/><rect x="4.3" y="41.7" width="4.4" height="5.3"/>
<rect x="74" y="1.3" width="10.8" height="3.5"/>
<rect x="60.9" y="75.2" width="2.1" height="8.7"/>
<rect x="15.2" y="85.2" width="3.5" height="10.9"/>
<rect x="60" y="108.7" width="7" height="6.5"/>
<rect x="123" y="78.7" width="4.8" height="9.1"/>
<rect x="166" y="84.3" width="8.8" height="2.7"/>
<rect x="229.7" y="35.7" width="4.3" height="14.7"/>
<rect x="227" y="74.6" width="1.5" height="17.9"/>
<rect x="203.6" y="116.9" width="11.1" height="4.6"/>
</g>
<rect x="20" y="85.4" width="4.8" height="1.2" fill="#8ab4f8"/>
<g fill="#fcefc8">
<rect x="8.3" y="111.3" width="13" height="10.9"/><rect x="215.8" y="26" width="7" height="10.5"/><rect x="239.3" y="3.5" width="6.1" height="4.3"/><rect x="251.5" y="31" width="6.1" height="15"/>
</g>
<!-- white roads -->
<g stroke="#ffffff" stroke-width="1.5" fill="none">
<path d="M15.2,0 V59 L26,68.7 V143.5"/>
<path d="M47.4,0 V143.5"/>
<path d="M90,0 V143.5"/>
<path d="M111.3,0 V143.5"/>
<path d="M122.2,0 V143.5"/>
<path d="M143.5,0 V143.5"/>
<path d="M154.3,0 V143.5"/>
<path d="M164.8,0 V143.5"/>
<path d="M175.7,0 V143.5"/>
<path d="M197.2,0 V94 L202.9,101.3 V143.5"/>
<path d="M207.6,0 V57 L203,62 V70"/>
<path d="M218.4,0 V94"/>
<path d="M222.5,94 V143.5"/>
<path d="M234.5,0 V30"/>
<path d="M239.5,115 V143.5"/>
<path d="M245.4,8.7 L257.6,70 L259.7,74.6 L268,128.9"/>
<path d="M261.9,0 V60"/>
<path d="M0,13 H30.4 L52,0"/>
<path d="M47.8,8.3 H268"/>
<path d="M0,30.4 H268"/>
<path d="M111.3,19.6 H122.2"/>
<path d="M111.3,41.7 H154.3"/>
<path d="M111.3,50.4 H197.2"/>
<path d="M0,84.3 H26"/>
<path d="M26,94.3 H268"/>
<path d="M0,115.8 H239.5"/>
<path d="M175.7,115.8 H268"/>
<path d="M143.5,121.7 H268"/>
</g>
<path d="M16,20.4 L52,0" stroke="#c6c9cd" stroke-width="0.7" fill="none"/>
<path d="M229.3,0 V143.5" stroke="#cfd2d6" stroke-width="0.9" fill="none"/>
<!-- yellow arterials -->
<g stroke="#f5c451" fill="none">
<path d="M68.5,0 V143.5" stroke-width="3"/>
<path d="M137.8,0 V91.7 L141.7,113.5 L140,143.5" stroke-width="3.6"/>
<path d="M0,73.3 H244 M251.4,72.8 L257.9,78.7 L268,83.8" stroke-width="3.4"/>
</g>
<g stroke="#fde7a6" fill="none" stroke-width="1.1">
<path d="M68.5,0 V143.5"/>
<path d="M137.8,0 V91.7 L141.7,113.5 L140,143.5"/>
<path d="M0,73.3 H244 M251.4,72.8 L257.9,78.7 L268,83.8"/>
</g>
<!-- route shields -->
<g>
<ellipse cx="15.2" cy="73.6" rx="6.4" ry="5.3" fill="#fff" stroke="#555" stroke-width="0.8"/>
<text x="15.2" y="76.3" font-family="Liberation Sans" font-size="7.5" text-anchor="middle" fill="#333">42</text>
<ellipse cx="244.1" cy="73.1" rx="6.4" ry="5.3" fill="#fff" stroke="#555" stroke-width="0.8"/>
<text x="244.1" y="75.9" font-family="Liberation Sans" font-size="7.5" text-anchor="middle" fill="#333">42</text>
</g>
<!-- labels -->
<text x="144.8" y="33" font-family="Liberation Sans" font-size="6.6" letter-spacing="1.3" fill="#555" stroke="#fff" stroke-width="1.5" paint-order="stroke">FLORENCE</text>
<text x="184" y="56" font-family="Liberation Sans" font-size="11.4" letter-spacing="0.1" fill="#3c3c3c" stroke="#fff" stroke-width="1.6" paint-order="stroke">Florence-Grahan</text>
<text x="246.5" y="7" font-family="Liberation Sans" font-size="10.5" fill="#3c3c3c" stroke="#fff" stroke-width="1.6" paint-order="stroke">Hunt</text>
<text x="262.5" y="18.5" font-family="Liberation Sans" font-size="10.5" fill="#3c3c3c" stroke="#fff" stroke-width="1.6" paint-order="stroke">F</text>
<text x="74" y="115.2" font-family="Liberation Sans" font-size="11.4" fill="#4c8fe6" stroke="#fff" stroke-width="1.6" paint-order="stroke">Superior Grocers</text>
<text x="215" y="124.7" font-family="Liberation Sans" font-size="6.6" letter-spacing="1.3" fill="#555" stroke="#fff" stroke-width="1.5" paint-order="stroke">WATTS</text>
<!-- shopping pin -->
<path d="M172.2,122.2 C169.5,117.5 163.9,113.5 163.9,107 A8.3,8.3 0 0 1 180.5,107 C180.5,113.5 174.9,117.5 172.2,122.2Z" fill="#4a8fe8"/>
<path d="M167.6,103.2 h1.7 l1.3,5 h5 l1.2,-3.6 h-6.6" stroke="#fff" stroke-width="1.2" fill="none"/>
<circle cx="171" cy="110.2" r="1" fill="#fff"/><circle cx="175" cy="110.2" r="1" fill="#fff"/>
<!-- property pin -->
<path d="M133.9,71.5 C131.2,67.5 125.2,64.8 125.2,60 A8.7,8.7 0 0 1 142.6,60 C142.6,64.8 136.6,67.5 133.9,71.5Z" fill="#1b5e92" stroke="#fff" stroke-width="0.6"/>
<circle cx="133.9" cy="60" r="2.7" fill="#fff"/>
<!-- bottom bar -->
<rect x="59" y="132.5" width="209" height="11" fill="#f4f5f6" fill-opacity="0.55"/><path d="M215,132.5 V143.5 M248.2,132.5 V143.5" stroke="#e0e2e5" stroke-width="0.8"/>
<text x="54.5" y="136.6" font-family="Liberation Sans" font-size="11.3" fill="#3a3a3a">Westmont</text>
<text x="8.7" y="136.2" font-family="Liberation Sans" font-size="14.3" letter-spacing="-0.1"><tspan fill="#4285f4">G</tspan><tspan fill="#ea4335">o</tspan><tspan fill="#fbbc05">o</tspan><tspan fill="#4285f4">g</tspan><tspan fill="#34a853">l</tspan><tspan fill="#ea4335">e</tspan></text>
<g>
<rect x="64.3" y="134.6" width="10.4" height="6.6" rx="0.8" fill="#fff" stroke="#222" stroke-width="1.1"/>
<path d="M66,136.4 h7 M66,138 h7 M66.8,139.6 h5.4" stroke="#222" stroke-width="0.9" stroke-dasharray="1 0.6"/>
</g>
<text x="85.8" y="140.8" font-family="Liberation Sans" font-size="8.1" fill="#444">Map Data</text>
<text x="131" y="141" font-family="Liberation Sans" font-size="8" fill="#444">2 km</text>
<path d="M154,137 V141 H207 V137" stroke="#555" stroke-width="1.4" fill="none"/>
<text x="219.3" y="140.8" font-family="Liberation Sans" font-size="8.5" fill="#444">Terms</text>
<circle cx="257.9" cy="138" r="2.8" fill="none" stroke="#333" stroke-width="1.8" stroke-dasharray="1.2 0.9"/>
<circle cx="257.9" cy="138" r="1.8" fill="none" stroke="#333" stroke-width="1"/>
</svg>

<div class="t" style="left:752.70px;top:63.90px;font-size:10px;line-height:10px;color:#757575;font-weight:400;">Last edit was 8 months ago</div>
<div class="t" style="left:912.60px;top:64.80px;font-size:10px;line-height:10px;color:#444444;font-weight:400;-webkit-text-stroke:0.35px #444;">ADD</div>
<svg class="r" style="left:939px;top:65px;" width="10" height="6" viewBox="0 0 10 6"><path d="M0.8 1 H9 L4.9 5z" fill="#666"/></svg>
<div class="r" style="left:955px;top:51px;width:42px;height:38px;box-shadow:inset 0 6px 6px -3px rgba(0,0,0,0.32), 0 4px 5px rgba(0,0,0,0.25);background:#fff"></div>
<div class="r" style="left:954px;top:50.3px;width:40px;height:35.4px;border:2.2px solid #ff1616;"></div>
<svg class="r" style="left:965px;top:57px;" width="24" height="24" viewBox="0 0 24 24"><g fill="#666"><path d="M4,6 Q4,4.5 5.5,4.5 H17.5 Q19,4.5 19,6 V13.4 H15.2 Q13.6,13.4 13.6,15 V19 H5.5 Q4,19 4,17.5 Z M7.3,7.3 V9.2 H16 V7.3 Z M7.3,10.7 V12.6 H16 V10.7 Z M7.3,14.1 V16 H12.2 V14.1 Z"/><path d="M9.6,4.6 A1.9,1.9 0 0 1 13.4,4.6 Z"/><path d="M17.8,15.2 H19.0 V17.7 H21.5 V18.9 H19.0 V21.4 H17.8 V18.9 H15.3 V17.7 H17.8 Z"/></g></svg>
<svg class="r" style="left:1003.5px;top:57.5px;" width="20" height="21" viewBox="0 0 24 24"><g fill="#666"><path d="M12 2C8.13 2 5 5.13 5 9c0 5.25 7 13 7 13s7-7.75 7-13c0-3.87-3.13-7-7-7zM7 9c0-2.76 2.24-5 5-5s5 2.24 5 5c0 2.88-2.88 7.19-5 9.88C9.92 16.21 7 11.85 7 9z"/><circle cx="12" cy="9" r="1.6"/></g></svg>
<svg class="r" style="left:1040.3px;top:58.8px;" width="20" height="20" viewBox="0 0 24 24"><path fill="#666" d="M16 1H4c-1.1 0-2 .9-2 2v14h2V3h12V1zm3 4H8c-1.1 0-2 .9-2 2v14c0 1.1.9 2 2 2h11c1.1 0 2-.9 2-2V7c0-1.1-.9-2-2-2zm0 16H8V7h11v14z"/></svg>
<svg class="r" style="left:1077.7px;top:58.9px;" width="19.5" height="19.5" viewBox="0 0 24 24"><g fill="#666"><path d="M14 2H6c-1.1 0-2 .9-2 2v16c0 1.1.9 2 2 2h12c1.1 0 2-.9 2-2V8l-6-6zm4 18H6V4h7v5h5v11z"/><path d="M13 12h-2v3H9l3 3 3-3h-2z"/></g></svg>
<svg class="r" style="left:1114.1px;top:58.5px;" width="20" height="20" viewBox="0 0 24 24"><path fill="#666" d="M6 19c0 1.1.9 2 2 2h8c1.1 0 2-.9 2-2V7H6v12zM19 4h-3.5l-1-1h-5l-1 1H5v2h14V4z"/></svg>
<div class="t" style="left:498.80px;transform:translateX(-50%);top:101.99px;font-size:11.3px;line-height:11.3px;color:#1f77c4;font-weight:400;letter-spacing:0.7px;-webkit-text-stroke:0.3px #1f77c4;">EXPENSE</div>
<div class="t" style="left:585.60px;transform:translateX(-50%);top:101.99px;font-size:11.3px;line-height:11.3px;color:#757575;font-weight:400;letter-spacing:0.7px;-webkit-text-stroke:0.3px #757575;">FILES</div>
<div class="t" style="left:671.20px;transform:translateX(-50%);top:101.99px;font-size:11.3px;line-height:11.3px;color:#757575;font-weight:400;letter-spacing:0.7px;-webkit-text-stroke:0.3px #757575;">RELATED</div>
<div class="r" style="left:450px;top:125.6px;width:98px;height:1.8px;background:#0b62b8;"></div>
<div class="t" style="left:470.60px;top:144.10px;font-size:16px;line-height:16px;color:#1a1a1a;font-weight:400;">General</div>
<div class="t" style="right:996.00px;top:175.05px;font-size:10px;line-height:10px;color:#636363;font-weight:400;">Comp ID</div>
<div class="t" style="left:615.00px;top:175.05px;font-size:10px;line-height:10px;color:#474747;font-weight:400;">3797430</div>
<div class="r" style="left:611px;top:188px;width:335px;height:2px;background:#efefef;"></div>
<div class="t" style="right:996.00px;top:198.55px;font-size:10px;line-height:10px;color:#636363;font-weight:400;">Property</div>
<div class="t" style="left:615.00px;top:198.55px;font-size:10px;line-height:10px;color:#474747;font-weight:400;">8530 Figueroa Street</div>
<div class="t" style="left:615.00px;top:212.30px;font-size:10px;line-height:10px;color:#474747;font-weight:400;">Los Angeles, CA 90003</div>
<div class="t" style="right:996.00px;top:234.55px;font-size:10px;line-height:10px;color:#636363;font-weight:400;">Property NRA</div>
<div class="t" style="left:615.00px;top:234.55px;font-size:10px;line-height:10px;color:#474747;font-weight:400;">8,306</div>
<div class="r" style="left:611px;top:247px;width:335px;height:2px;background:#efefef;"></div>
<div class="t" style="right:996.00px;top:257.90px;font-size:10px;line-height:10px;color:#636363;font-weight:400;">Property Units</div>
<div class="t" style="left:615.00px;top:257.90px;font-size:10px;line-height:10px;color:#474747;font-weight:400;">0</div>
<div class="r" style="left:611px;top:271px;width:335px;height:2px;background:#efefef;"></div>
<div class="t" style="right:996.00px;top:281.05px;font-size:10px;line-height:10px;color:#636363;font-weight:400;">Expense Year</div>
<div class="t" style="left:615.00px;top:281.05px;font-size:10px;line-height:10px;color:#474747;font-weight:400;">2020</div>
<div class="r" style="left:611px;top:294px;width:335px;height:2px;background:#efefef;"></div>
<div class="t" style="right:442.00px;top:175.10px;font-size:10px;line-height:10px;color:#636363;font-weight:400;">Source</div>
<div class="r" style="left:1165px;top:188px;width:335px;height:2px;background:#efefef;"></div>
<div class="t" style="right:442.00px;top:198.10px;font-size:10px;line-height:10px;color:#636363;font-weight:400;">Occupancy</div>
<div class="t" style="left:1169.50px;top:198.10px;font-size:10px;line-height:10px;color:#474747;font-weight:400;">100.0 %</div>
<div class="r" style="left:1165px;top:211.6px;width:335px;height:1.5px;background:#e9e9e9;"></div>
<div class="t" style="right:442.00px;top:221.30px;font-size:10px;line-height:10px;color:#636363;font-weight:400;">Expense Comments</div>
<div class="r" style="left:1165px;top:216px;width:333px;height:61px;border:1px solid #e0e0e0;background:#fff"></div>
<svg class="r" style="left:1490px;top:269px;" width="9" height="9" viewBox="0 0 9 9"><path d="M8 2 L2 8 M8 5 L5 8" stroke="#9a9a9a" stroke-width="0.9"/></svg>
<div class="t" style="left:470.50px;top:339.00px;font-size:16px;line-height:16px;color:#1a1a1a;font-weight:400;letter-spacing:0.6px;">Income</div>
<div class="t" style="right:886.40px;top:376.20px;font-size:10px;line-height:10px;color:#5a5a5a;font-weight:400;">Total</div>
<div class="r" style="left:611px;top:387.9px;width:104.4px;height:1.2px;background:#3a3a3a;"></div>
<div class="t" style="right:769.20px;top:376.20px;font-size:10px;line-height:10px;color:#5a5a5a;font-weight:400;">$/SF</div>
<div class="r" style="left:728.2px;top:387.9px;width:104.4px;height:1.2px;background:#3a3a3a;"></div>
<div class="t" style="right:651.80px;top:376.20px;font-size:10px;line-height:10px;color:#5a5a5a;font-weight:400;">$/Unit</div>
<div class="r" style="left:845.6px;top:387.9px;width:104.4px;height:1.2px;background:#3a3a3a;"></div>
<div class="t" style="right:996.00px;top:398.00px;font-size:10px;line-height:10px;color:#636363;font-weight:400;">Rental Income</div>
<div class="t" style="right:886.80px;top:398.00px;font-size:10px;line-height:10px;color:#474747;font-weight:400;">$ 365,464.00</div>
<div class="r" style="left:611px;top:412px;width:104.4px;height:2px;background:#efefef;"></div>
<div class="t" style="right:769.60px;top:398.00px;font-size:10px;line-height:10px;color:#474747;font-weight:400;">$ 44.00</div>
<div class="r" style="left:728.2px;top:412px;width:104.4px;height:2px;background:#efefef;"></div>
<div class="t" style="right:652.20px;top:398.00px;font-size:10px;line-height:10px;color:#8f8f8f;font-weight:400;">0</div>
<div class="r" style="left:845.6px;top:412px;width:104.4px;height:2px;background:#efefef;"></div>
<div class="t" style="right:996.00px;top:421.30px;font-size:10px;line-height:10px;color:#636363;font-weight:400;">Other Income</div>
<div class="t" style="right:886.80px;top:421.30px;font-size:10px;line-height:10px;color:#474747;font-weight:400;">$ 66,448.00</div>
<div class="r" style="left:611px;top:435px;width:104.4px;height:2px;background:#efefef;"></div>
<div class="t" style="right:769.60px;top:421.30px;font-size:10px;line-height:10px;color:#474747;font-weight:400;">$ 8.00</div>
<div class="r" style="left:728.2px;top:435px;width:104.4px;height:2px;background:#efefef;"></div>
<div class="t" style="right:652.20px;top:421.30px;font-size:10px;line-height:10px;color:#8f8f8f;font-weight:400;">0</div>
<div class="r" style="left:845.6px;top:435px;width:104.4px;height:2px;background:#efefef;"></div>
<div class="t" style="right:996.00px;top:444.60px;font-size:10px;line-height:10px;color:#636363;font-weight:400;">Effective Gross Income</div>
<div class="t" style="right:886.80px;top:444.60px;font-size:10px;line-height:10px;color:#474747;font-weight:400;">$ 431,912.00</div>
<div class="t" style="right:769.60px;top:444.60px;font-size:10px;line-height:10px;color:#474747;font-weight:400;">$ 52.00</div>
<div class="t" style="right:652.20px;top:444.60px;font-size:10px;line-height:10px;color:#8f8f8f;font-weight:400;">0</div>
<div class="t" style="left:470.60px;top:506.30px;font-size:16px;line-height:16px;color:#1a1a1a;font-weight:400;letter-spacing:0.18px;">Expenses</div>
<div class="t" style="right:886.40px;top:543.10px;font-size:10px;line-height:10px;color:#5a5a5a;font-weight:400;">Total</div>
<div class="r" style="left:611px;top:554.8px;width:104.4px;height:1.2px;background:#3a3a3a;"></div>
<div class="t" style="right:769.20px;top:543.10px;font-size:10px;line-height:10px;color:#5a5a5a;font-weight:400;">$/SF</div>
<div class="r" style="left:728.2px;top:554.8px;width:104.4px;height:1.2px;background:#3a3a3a;"></div>
<div class="t" style="right:651.80px;top:543.10px;font-size:10px;line-height:10px;color:#5a5a5a;font-weight:400;">$/Unit</div>
<div class="r" style="left:845.6px;top:554.8px;width:104.4px;height:1.2px;background:#3a3a3a;"></div>
<div class="t" style="right:534.20px;top:543.10px;font-size:10px;line-height:10px;color:#5a5a5a;font-weight:400;">%EGI</div>
<div class="r" style="left:963.2px;top:554.8px;width:104.4px;height:1.2px;background:#3a3a3a;"></div>
<div class="t" style="right:996.00px;top:564.90px;font-size:10px;line-height:10px;color:#636363;font-weight:400;">Taxes</div>
<div class="t" style="right:886.80px;top:564.90px;font-size:10px;line-height:10px;color:#474747;font-weight:400;">$ 41,530.00</div>
<div class="r" style="left:611px;top:578px;width:104.4px;height:2px;background:#efefef;"></div>
<div class="t" style="right:769.60px;top:564.90px;font-size:10px;line-height:10px;color:#474747;font-weight:400;">$ 5.00</div>
<div class="r" style="left:728.2px;top:578px;width:104.4px;height:2px;background:#efefef;"></div>
<div class="t" style="right:652.20px;top:564.90px;font-size:10px;line-height:10px;color:#8f8f8f;font-weight:400;">0</div>
<div class="r" style="left:845.6px;top:578px;width:104.4px;height:2px;background:#efefef;"></div>
<div class="t" style="right:534.60px;top:564.90px;font-size:10px;line-height:10px;color:#474747;font-weight:400;">9.62 %</div>
<div class="r" style="left:963.2px;top:578px;width:104.4px;height:2px;background:#efefef;"></div>
<div class="t" style="right:996.00px;top:588.35px;font-size:10px;line-height:10px;color:#636363;font-weight:400;">Insurance</div>
<div class="t" style="right:886.80px;top:588.35px;font-size:10px;line-height:10px;color:#474747;font-weight:400;">$ 16,612.00</div>
<div class="r" style="left:611px;top:602px;width:104.4px;height:2px;background:#efefef;"></div>
<div class="t" style="right:769.60px;top:588.35px;font-size:10px;line-height:10px;color:#474747;font-weight:400;">$ 2.00</div>
<div class="r" style="left:728.2px;top:602px;width:104.4px;height:2px;background:#efefef;"></div>
<div class="t" style="right:652.20px;top:588.35px;font-size:10px;line-height:10px;color:#8f8f8f;font-weight:400;">0</div>
<div class="r" style="left:845.6px;top:602px;width:104.4px;height:2px;background:#efefef;"></div>
<div class="t" style="right:534.60px;top:588.35px;font-size:10px;line-height:10px;color:#474747;font-weight:400;">3.85 %</div>
<div class="r" style="left:963.2px;top:602px;width:104.4px;height:2px;background:#efefef;"></div>
<div class="t" style="right:996.00px;top:611.80px;font-size:10px;line-height:10px;color:#636363;font-weight:400;">Common Area Maintenance</div>
<div class="t" style="right:886.80px;top:611.80px;font-size:10px;line-height:10px;color:#474747;font-weight:400;">$ 24,918.00</div>
<div class="r" style="left:611px;top:625px;width:104.4px;height:2px;background:#efefef;"></div>
<div class="t" style="right:769.60px;top:611.80px;font-size:10px;line-height:10px;color:#474747;font-weight:400;">$ 3.00</div>
<div class="r" style="left:728.2px;top:625px;width:104.4px;height:2px;background:#efefef;"></div>
<div class="t" style="right:652.20px;top:611.80px;font-size:10px;line-height:10px;color:#8f8f8f;font-weight:400;">0</div>
<div class="r" style="left:845.6px;top:625px;width:104.4px;height:2px;background:#efefef;"></div>
<div class="t" style="right:534.60px;top:611.80px;font-size:10px;line-height:10px;color:#474747;font-weight:400;">5.77 %</div>
<div class="r" style="left:963.2px;top:625px;width:104.4px;height:2px;background:#efefef;"></div>
<div class="t" style="right:996.00px;top:635.25px;font-size:10px;line-height:10px;color:#636363;font-weight:400;">Repairs &amp; Maintenance</div>
<div class="t" style="right:886.80px;top:635.25px;font-size:10px;line-height:10px;color:#474747;font-weight:400;">$ 91,366.00</div>
<div class="r" style="left:611px;top:648px;width:104.4px;height:2px;background:#efefef;"></div>
<div class="t" style="right:769.60px;top:635.25px;font-size:10px;line-height:10px;color:#474747;font-weight:400;">$ 11.00</div>
<div class="r" style="left:728.2px;top:648px;width:104.4px;height:2px;background:#efefef;"></div>
<div class="t" style="right:652.20px;top:635.25px;font-size:10px;line-height:10px;color:#8f8f8f;font-weight:400;">0</div>
<div class="r" style="left:845.6px;top:648px;width:104.4px;height:2px;background:#efefef;"></div>
<div class="t" style="right:534.60px;top:635.25px;font-size:10px;line-height:10px;color:#474747;font-weight:400;">21.15 %</div>
<div class="r" style="left:963.2px;top:648px;width:104.4px;height:2px;background:#efefef;"></div>
<div class="t" style="right:996.00px;top:658.70px;font-size:10px;line-height:10px;color:#636363;font-weight:400;">Cleaning &amp; Janitorial</div>
<div class="t" style="right:886.80px;top:658.70px;font-size:10px;line-height:10px;color:#8f8f8f;font-weight:400;">0</div>
<div class="r" style="left:611px;top:672px;width:104.4px;height:2px;background:#efefef;"></div>
<div class="t" style="right:769.60px;top:658.70px;font-size:10px;line-height:10px;color:#8f8f8f;font-weight:400;">0</div>
<div class="r" style="left:728.2px;top:672px;width:104.4px;height:2px;background:#efefef;"></div>
<div class="t" style="right:652.20px;top:658.70px;font-size:10px;line-height:10px;color:#8f8f8f;font-weight:400;">0</div>
<div class="r" style="left:845.6px;top:672px;width:104.4px;height:2px;background:#efefef;"></div>
<div class="t" style="right:534.60px;top:658.70px;font-size:10px;line-height:10px;color:#8f8f8f;font-weight:400;">0</div>
<div class="r" style="left:963.2px;top:672px;width:104.4px;height:2px;background:#efefef;"></div>
<div class="t" style="right:996.00px;top:682.15px;font-size:10px;line-height:10px;color:#636363;font-weight:400;">Roads &amp; Grounds</div>
<div class="t" style="right:886.80px;top:682.15px;font-size:10px;line-height:10px;color:#474747;font-weight:400;">$ 8,306.00</div>
<div class="r" style="left:611px;top:695px;width:104.4px;height:2px;background:#efefef;"></div>
<div class="t" style="right:769.60px;top:682.15px;font-size:10px;line-height:10px;color:#474747;font-weight:400;">$ 1.00</div>
<div class="r" style="left:728.2px;top:695px;width:104.4px;height:2px;background:#efefef;"></div>
<div class="t" style="right:652.20px;top:682.15px;font-size:10px;line-height:10px;color:#8f8f8f;font-weight:400;">0</div>
<div class="r" style="left:845.6px;top:695px;width:104.4px;height:2px;background:#efefef;"></div>
<div class="t" style="right:534.60px;top:682.15px;font-size:10px;line-height:10px;color:#474747;font-weight:400;">1.92 %</div>
<div class="r" style="left:963.2px;top:695px;width:104.4px;height:2px;background:#efefef;"></div>
<div class="t" style="right:996.00px;top:705.60px;font-size:10px;line-height:10px;color:#636363;font-weight:400;">Advertising</div>
<div class="t" style="right:886.80px;top:705.60px;font-size:10px;line-height:10px;color:#8f8f8f;font-weight:400;">0</div>
<div class="r" style="left:611px;top:719px;width:104.4px;height:2px;background:#efefef;"></div>
<div class="t" style="right:769.60px;top:705.60px;font-size:10px;line-height:10px;color:#8f8f8f;font-weight:400;">0</div>
<div class="r" style="left:728.2px;top:719px;width:104.4px;height:2px;background:#efefef;"></div>
<div class="t" style="right:652.20px;top:705.60px;font-size:10px;line-height:10px;color:#8f8f8f;font-weight:400;">0</div>
<div class="r" style="left:845.6px;top:719px;width:104.4px;height:2px;background:#efefef;"></div>
<div class="t" style="right:534.60px;top:705.60px;font-size:10px;line-height:10px;color:#8f8f8f;font-weight:400;">0</div>
<div class="r" style="left:963.2px;top:719px;width:104.4px;height:2px;background:#efefef;"></div>
<div class="t" style="right:996.00px;top:729.05px;font-size:10px;line-height:10px;color:#636363;font-weight:400;">Payroll</div>
<div class="t" style="right:886.80px;top:729.05px;font-size:10px;line-height:10px;color:#8f8f8f;font-weight:400;">0</div>
<div class="r" style="left:611px;top:742px;width:104.4px;height:2px;background:#efefef;"></div>
<div class="t" style="right:769.60px;top:729.05px;font-size:10px;line-height:10px;color:#8f8f8f;font-weight:400;">0</div>
<div class="r" style="left:728.2px;top:742px;width:104.4px;height:2px;background:#efefef;"></div>
<div class="t" style="right:652.20px;top:729.05px;font-size:10px;line-height:10px;color:#8f8f8f;font-weight:400;">0</div>
<div class="r" style="left:845.6px;top:742px;width:104.4px;height:2px;background:#efefef;"></div>
<div class="t" style="right:534.60px;top:729.05px;font-size:10px;line-height:10px;color:#8f8f8f;font-weight:400;">0</div>
<div class="r" style="left:963.2px;top:742px;width:104.4px;height:2px;background:#efefef;"></div>
<div class="t" style="right:996.00px;top:752.50px;font-size:10px;line-height:10px;color:#636363;font-weight:400;">Security</div>
<div class="t" style="right:886.80px;top:752.50px;font-size:10px;line-height:10px;color:#474747;font-weight:400;">$ 20,000.00</div>
<div class="r" style="left:611px;top:766px;width:104.4px;height:2px;background:#efefef;"></div>
<div class="t" style="right:769.60px;top:752.50px;font-size:10px;line-height:10px;color:#474747;font-weight:400;">$ 2.41</div>
<div class="r" style="left:728.2px;top:766px;width:104.4px;height:2px;background:#efefef;"></div>
<div class="t" style="right:652.20px;top:752.50px;font-size:10px;line-height:10px;color:#8f8f8f;font-weight:400;">0</div>
<div class="r" style="left:845.6px;top:766px;width:104.4px;height:2px;background:#efefef;"></div>
<div class="t" style="right:534.60px;top:752.50px;font-size:10px;line-height:10px;color:#474747;font-weight:400;">4.63 %</div>
<div class="r" style="left:963.2px;top:766px;width:104.4px;height:2px;background:#efefef;"></div>
<div class="t" style="right:996.00px;top:775.95px;font-size:10px;line-height:10px;color:#636363;font-weight:400;">Utilities</div>
<div class="t" style="right:886.80px;top:775.95px;font-size:10px;line-height:10px;color:#8f8f8f;font-weight:400;">0</div>
<div class="r" style="left:611px;top:789px;width:104.4px;height:2px;background:#efefef;"></div>
<div class="t" style="right:769.60px;top:775.95px;font-size:10px;line-height:10px;color:#8f8f8f;font-weight:400;">0</div>
<div class="r" style="left:728.2px;top:789px;width:104.4px;height:2px;background:#efefef;"></div>
<div class="t" style="right:652.20px;top:775.95px;font-size:10px;line-height:10px;color:#8f8f8f;font-weight:400;">0</div>
<div class="r" style="left:845.6px;top:789px;width:104.4px;height:2px;background:#efefef;"></div>
<div class="t" style="right:534.60px;top:775.95px;font-size:10px;line-height:10px;color:#8f8f8f;font-weight:400;">0</div>
<div class="r" style="left:963.2px;top:789px;width:104.4px;height:2px;background:#efefef;"></div>
<div class="t" style="right:996.00px;top:799.40px;font-size:10px;line-height:10px;color:#636363;font-weight:400;">Electricity</div>
<div class="t" style="right:886.80px;top:799.40px;font-size:10px;line-height:10px;color:#8f8f8f;font-weight:400;">0</div>
<div class="r" style="left:611px;top:813px;width:104.4px;height:2px;background:#efefef;"></div>
<div class="t" style="right:769.60px;top:799.40px;font-size:10px;line-height:10px;color:#8f8f8f;font-weight:400;">0</div>
<div class="r" style="left:728.2px;top:813px;width:104.4px;height:2px;background:#efefef;"></div>
<div class="t" style="right:652.20px;top:799.40px;font-size:10px;line-height:10px;color:#8f8f8f;font-weight:400;">0</div>
<div class="r" style="left:845.6px;top:813px;width:104.4px;height:2px;background:#efefef;"></div>
<div class="t" style="right:534.60px;top:799.40px;font-size:10px;line-height:10px;color:#8f8f8f;font-weight:400;">0</div>
<div class="r" style="left:963.2px;top:813px;width:104.4px;height:2px;background:#efefef;"></div>
<div class="r" style="left:1596.5px;top:127.5px;width:3.5px;height:677.5px;background:#f1f1f1;"></div>
<div class="r" style="left:1598px;top:142px;width:2px;height:350.6px;background:#c1c1c1;"></div>
</body></html>
